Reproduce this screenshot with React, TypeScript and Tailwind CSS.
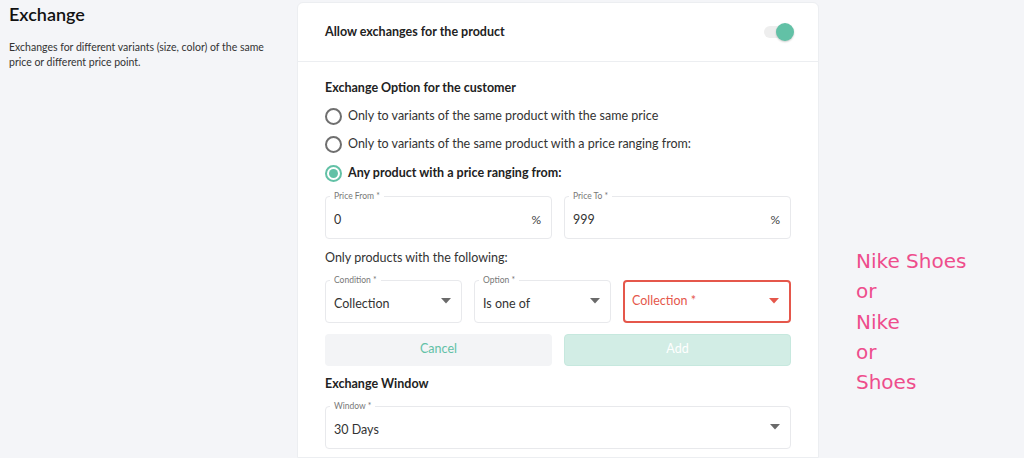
import React from "react";

const FONT = { fontFamily: "Lato, 'Open Sans', sans-serif" };

function Radio({ checked, label }: { checked?: boolean; label: string }) {
  return (
    <div className="flex h-[28.5px] items-center gap-[6px]">
      {checked ? (
        <span className="flex h-[17px] w-[17px] items-center justify-center rounded-full border-2 border-[#62c1a6]">
          <span className="h-[9px] w-[9px] rounded-full bg-[#62c1a6]" />
        </span>
      ) : (
        <span className="h-[17px] w-[17px] rounded-full border-2 border-[#6f6f6f]" />
      )}
      <span
        className={
          checked
            ? "text-[12.5px] font-bold text-[#222]"
            : "text-[12.5px] text-[#333]"
        }
      >
        {label}
      </span>
    </div>
  );
}

function Caret({ red }: { red?: boolean }) {
  return (
    <svg width="10" height="6" viewBox="0 0 10 6" className="shrink-0">
      <path d="M0 0h10L5 5.5z" fill={red ? "#e5574b" : "#6a6a6a"} />
    </svg>
  );
}

function Field({
  label,
  value,
  suffix,
  select,
  className,
}: {
  label: string;
  value: string;
  suffix?: string;
  select?: boolean;
  className?: string;
}) {
  return (
    <div
      className={
        "relative flex h-[43px] items-center justify-between rounded-[4px] border border-[#e8e9ec] bg-white pl-[8px] pr-[10px] " +
        (className ?? "")
      }
    >
      <span className="absolute -top-[6px] left-[4px] bg-white px-[4px] text-[8.5px] leading-[10px] text-[#777]">
        {label}
      </span>
      <span className="pt-[6px] text-[12.5px] text-[#333]">{value}</span>
      {suffix && <span className="pt-[6px] text-[12px] text-[#444]">{suffix}</span>}
      {select && <Caret />}
    </div>
  );
}

export default function App() {
  return (
    <div className="flex h-[458px] w-[1024px] overflow-hidden bg-[#f4f5f8]" style={FONT}>
      <div className="w-[297px] shrink-0 pl-[9px] pr-[20px] pt-[3px]">
        <h2 className="text-[18px] font-semibold leading-[22px] text-[#111]">Exchange</h2>
        <p className="mt-[15px] text-[10.5px] leading-[15px] text-[#333]">
          Exchanges for different variants (size, color) of the same price or different price point.
        </p>
      </div>

      <div className="mt-[2px] w-[522px] shrink-0 rounded-t-[6px] border border-[#eceef1] bg-white">
        <div className="flex h-[59px] items-center justify-between border-b border-[#eceef1] px-[27px]">
          <span className="text-[12.5px] font-bold text-[#222]">Allow exchanges for the product</span>
          <span className="relative mr-[-1px] h-[12px] w-[28px] rounded-full bg-[#eeeeee]">
            <span className="absolute -top-[3px] right-[-2px] h-[18px] w-[18px] rounded-full bg-[#62c1a6] shadow-[0_1px_2px_rgba(0,0,0,0.2)]" />
          </span>
        </div>

        <div className="px-[27px] pt-[17px]">
          <div className="text-[12.5px] font-bold leading-[18px] text-[#222]">
            Exchange Option for the customer
          </div>
          <div className="mt-[5px] flex flex-col">
            <Radio label="Only to variants of the same product with the same price" />
            <Radio label="Only to variants of the same product with a price ranging from:" />
            <Radio checked label="Any product with a price ranging from:" />
          </div>

          <div className="mt-[8px] grid grid-cols-2 gap-[12px]">
            <Field label="Price From *" value="0" suffix="%" />
            <Field label="Price To *" value="999" suffix="%" />
          </div>

          <div className="mt-[11px] text-[12.5px] leading-[16px] text-[#333]">
            Only products with the following:
          </div>

          <div className="mt-[14px] flex gap-[12px]">
            <Field label="Condition *" value="Collection" select className="w-[137px]" />
            <Field label="Option *" value="Is one of" select className="w-[137px]" />
            <div className="flex h-[43px] flex-1 items-center justify-between rounded-[4px] border-2 border-[#e5574b] bg-white pl-[7px] pr-[10px]">
              <span className="text-[12.5px] text-[#e5574b]">Collection *</span>
              <Caret red />
            </div>
          </div>

          <div className="mt-[11px] grid grid-cols-2 gap-[12px]">
            <button className="h-[32px] rounded-[4px] bg-[#f3f4f6] text-[12.5px] text-[#62c1a6]">
              Cancel
            </button>
            <button className="h-[32px] rounded-[4px] border border-[#c6e8de] bg-[#d2ede5] text-[12.5px] text-white">
              Add
            </button>
          </div>

          <div className="mt-[9px] text-[12.5px] font-bold leading-[18px] text-[#222]">
            Exchange Window
          </div>

          <div className="mt-[13px]">
            <Field label="Window *" value="30 Days" select />
          </div>
        </div>
      </div>

      <div
        className="pl-[37px] pt-[246px] text-[20px] leading-[30.3px] text-[#ee4d8c]"
        style={{ fontFamily: "'DejaVu Sans', sans-serif" }}
      >
        <div>Nike Shoes</div>
        <div>or</div>
        <div>Nike</div>
        <div>or</div>
        <div>Shoes</div>
      </div>
    </div>
  );
}
